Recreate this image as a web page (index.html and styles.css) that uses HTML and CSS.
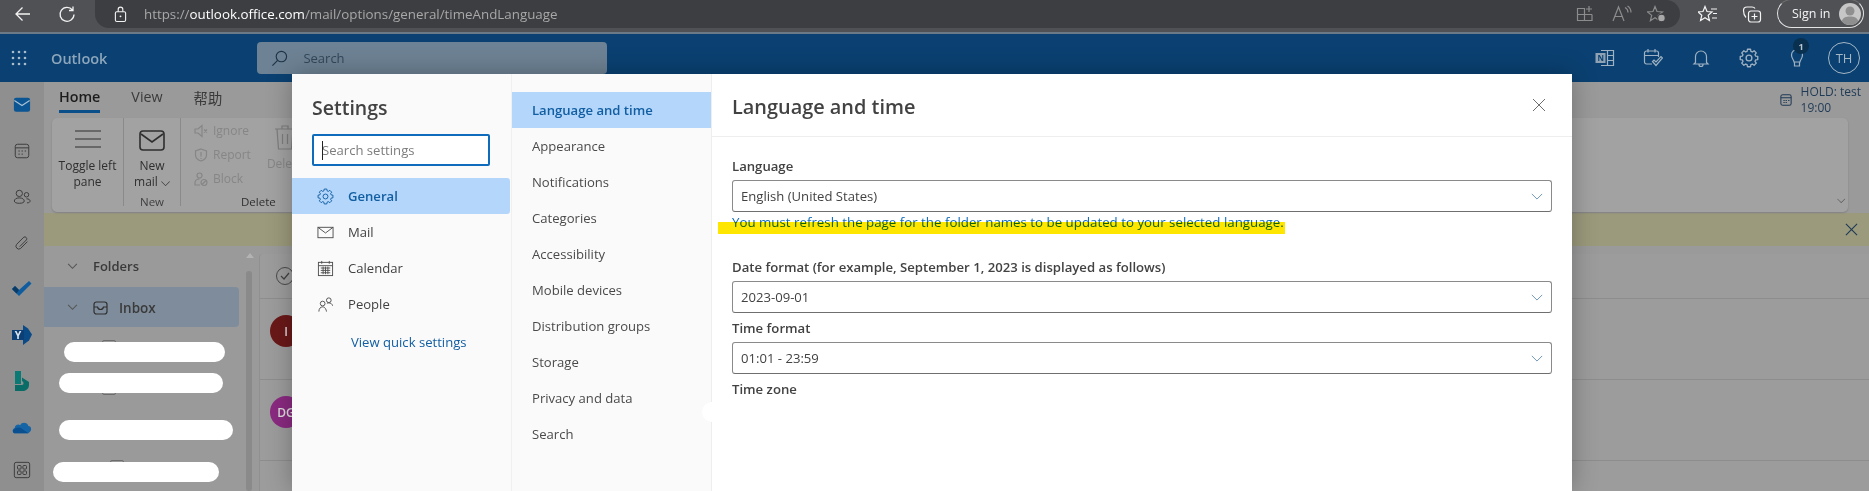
FILE: index.html
```html
<!DOCTYPE html>
<html lang="en">
<head>
<meta charset="utf-8">
<title>Outlook settings</title>
<link rel="stylesheet" href="styles.css">
</head>
<body>
<div class="page">
  <div class="chrome">
    <svg class="c-btn back" viewBox="0 0 18 18"><path d="M16 9H2M8.500 2.500 2 9l6.500 6.500"/></svg>
    <svg class="c-btn reload" viewBox="0 0 18 18"><path d="M14.500 5A7 7 0 1 0 16 9.500M15 1.500V5.500H11"/></svg>
    <div class="addr">
      <svg class="lock" viewBox="0 0 14 18"><rect x="1.500" y="6" width="11" height="10.500" rx="1.500"/><path d="M4.500 6V3.500a2.500 2.500 0 0 1 5 0V6"/><circle cx="7" cy="11" r="1" class="dot"/></svg>
      <span class="url"><span class="dim">https://</span>outlook.office.com<span class="dim">/mail/options/general/timeAndLanguage</span></span>
      <div class="addr-icons">
        <svg class="c-ico muted first" viewBox="0 0 18 18"><path d="M1.500 3.500h7v12h-7zM1.500 9.500h14.500M8.500 15.500h7.500V9.500M8.500 9.500V3.500M13 1v6M10 4h6"/></svg>
        <svg class="c-ico muted wide" viewBox="0 0 20 18"><path d="M1 16 6.500 2l5.500 14M3 11.500h7M13 2.500c2 1 3 3 3 5M15.500 1c2.500 1.500 3.500 4 3.500 6.500"/></svg>
        <svg class="c-ico muted wide" viewBox="0 0 20 18"><path d="M8 1.500 10 6.500l5.500.4-4.200 3.500 1.300 5.300L8 12.800l-4.600 2.900 1.300-5.300L.5 6.900 6 6.500z"/><circle cx="14.500" cy="13" r="3.800" class="fill"/></svg>
      </div>
    </div>
    <div class="chrome-right">
      <svg class="c-ico light wide" viewBox="0 0 20 18"><path d="M7 1.500 9 6.500l5 .4-3.800 3.300 1.200 5.300L7 12.700l-4.400 2.800 1.200-5.300L0 6.900l5-.4zM13 4h6M15 8.500h4M14 13h5"/></svg>
      <svg class="c-ico light wide" viewBox="0 0 20 18"><path d="M4 12.500C2.500 11 1.500 8 1.500 5.500c0-2 1-3.500 3.500-3.500h5c1.500 0 2.500.5 3 1.500"/><rect x="6.500" y="6" width="12" height="11" rx="2.500"/><path d="M12.500 8.500v6M9.500 11.500h6"/></svg>
      <div class="signin"><span>Sign in</span><span class="me"><svg viewBox="0 0 22 22"><circle cx="11" cy="8" r="4.500"/><path d="M2.500 19c1-4.500 4.500-5.500 8.500-5.500s7.500 1 8.500 5.500a11 11 0 0 1-17 0z"/></svg></span></div>
    </div>
  </div>

  <header class="topbar">
    <svg class="waffle" viewBox="0 0 16 16"><g><circle cx="2" cy="2" r="1.300"/><circle cx="8" cy="2" r="1.300"/><circle cx="14" cy="2" r="1.300"/><circle cx="2" cy="8" r="1.300"/><circle cx="8" cy="8" r="1.300"/><circle cx="14" cy="8" r="1.300"/><circle cx="2" cy="14" r="1.300"/><circle cx="8" cy="14" r="1.300"/><circle cx="14" cy="14" r="1.300"/></g></svg>
    <span class="brand">Outlook</span>
    <div class="search">
      <svg viewBox="0 0 18 18"><circle cx="11" cy="7" r="5.500"/><path d="M7 11 1.500 16.500"/></svg>
      <span>Search</span>
    </div>
    <div class="top-icons">
      <svg class="t-ico" viewBox="0 0 20 20"><rect x="0.500" y="5" width="10" height="10" class="note-box"/><path d="M6 2.500h12.500v15H6M12.500 2.500v15M12.500 7.500h6M12.500 12.500h6"/><text x="2.500" y="13" class="note-n">N</text></svg>
      <svg class="t-ico" viewBox="0 0 20 20"><path d="M9 16H3.500a2 2 0 0 1-2-2V5a2 2 0 0 1 2-2h10a2 2 0 0 1 2 2v4M1.500 7.500h14M5 1v3.500M12 1v3.500M9.500 13.500l3.500 4 6.500-7.500-1.500-1.500-5 5.500-2-2z"/></svg>
      <svg class="t-ico" viewBox="0 0 20 20"><path d="M4.500 14.500V8.500a5.500 5.500 0 0 1 11 0v6l1.500 1.500H3zM8 16.500a2 2 0 0 0 4 0"/></svg>
      <svg class="t-ico" viewBox="0 0 18 18"><circle cx="9" cy="9" r="2.600"/><path class="cog" d="M16.880 7.610 16.880 10.390 14.960 10.710 14.420 12 15.550 13.590 13.590 15.550 12 14.420 10.710 14.960 10.390 16.880 7.610 16.880 7.290 14.960 6 14.420 4.410 15.550 2.450 13.590 3.580 12 3.040 10.710 1.120 10.390 1.120 7.610 3.040 7.290 3.580 6 2.450 4.410 4.410 2.450 6 3.580 7.290 3.040 7.610 1.120 10.390 1.120 10.710 3.040 12 3.580 13.590 2.450 15.550 4.410 14.420 6 14.960 7.290z"/></svg>
      <span class="tip">
        <svg class="t-ico" viewBox="0 0 20 20"><path d="M7 14c0-2-2.500-3.500-2.500-7a5.500 5.500 0 0 1 11 0c0 3.500-2.500 5-2.500 7zM7.500 14v4h5v-4"/></svg>
        <span class="badge">1</span>
      </span>
      <span class="avatar-th">TH</span>
    </div>
  </header>

  <div class="app">
    <nav class="rail">
      <span class="r-item"><svg viewBox="0 0 20 18"><rect x="1" y="1" width="18" height="15.500" rx="2.500" class="solid-blue"/><path d="M1.500 4 10 9.500 18.500 4" class="white-line"/></svg></span>
      <span class="r-item"><svg viewBox="0 0 20 20"><rect x="2.500" y="2.500" width="15" height="15" rx="2.500"/><path d="M2.500 6.500h15M6 10h1.500M9.500 10H11M13 10h1.500M6 13.500h1.500M9.500 13.500H11"/></svg></span>
      <span class="r-item"><svg viewBox="0 0 20 20"><circle cx="7" cy="6" r="3.500"/><path d="M1.500 14.500c0-2 2-3.500 5.500-3.500s5.500 1.500 5.500 3.500c0 1.500-2 2.500-5.500 2.500s-5.500-1-5.500-2.500z"/><circle cx="15" cy="7.500" r="2.500"/><path d="M15 12c2.500 0 4 1 4 2.500 0 1-1 2-3.500 2"/></svg></span>
      <span class="r-item"><svg viewBox="0 0 20 20"><path d="M16 8.500 8.500 16a3.200 3.200 0 0 1-4.500-4.500L12 3.500a2.200 2.200 0 0 1 3 3L7.500 14"/></svg></span>
      <span class="r-item"><svg class="solid big" viewBox="0 0 20 16"><path d="M0 8 3 5l4 4L17 0l2.500 2.500L7 15z" class="todo"/><path d="M3 5l4 4-2.500 3.500L0 8z" class="todo-dark"/></svg></span>
      <span class="r-item"><svg class="solid big" viewBox="0 0 20 20"><path d="M11 0l5 3.500 4 6-3 6-6 4.500z" class="ya"/><rect x="0" y="5" width="12" height="10" class="ya-box"/><text x="2.800" y="13.500" class="ya-y">Y</text></svg></span>
      <span class="r-item"><svg class="solid big" viewBox="0 0 14 20"><rect x="0" y="0" width="6" height="13" class="bi"/><path d="M7 6.500 14 11v3c0 3.500-3 6-6 6H0v-6h7c2 0 2-3 0-4z" class="bi-dark"/></svg></span>
      <span class="r-item"><svg class="solid big" viewBox="0 0 22 16"><path d="M3 15C0 14 0 10 3 9c0-3 4-5 6-3 2-4 8-3 9 1 3 0 4 4 2 6-1 1-2 2-3 2z" class="od"/><path d="M1 12c3-4 7-4 10-2l7 5H3C2 15 1 14 1 12z" class="od-dark"/></svg></span>
      <span class="r-item apps"><svg viewBox="0 0 20 20"><rect x="1.500" y="1.500" width="17" height="17" rx="2"/><rect x="5" y="5" width="4" height="4" rx="1"/><rect x="11" y="5" width="4" height="4" rx="1"/><rect x="5" y="11" width="4" height="4" rx="1"/><rect x="11" y="11" width="4" height="4" rx="1"/></svg></span>
    </nav>

    <main class="work">
      <div class="tabs">
        <span class="tab active">Home</span>
        <span class="tab">View</span>
        <span class="tab cjk">帮助</span>
        <div class="hold">
          <svg viewBox="0 0 14 14"><rect x="1" y="1" width="12" height="12" rx="2"/><path d="M1 4.500h12M4 7.500h1.500M6.500 7.500H8M9.500 7.500H11M4 10h1.500M6.500 10H8"/></svg>
          <div><div>HOLD: test</div><div>19:00</div></div>
        </div>
      </div>
      <section class="ribbon">
        <div class="r-group toggle">
          <svg viewBox="0 0 26 18"><path d="M0 1h26M0 9h26M0 17h26"/></svg>
          <span>Toggle left</span><span>pane</span>
        </div>
        <div class="r-group newmail">
          <svg viewBox="0 0 26 21"><rect x="1" y="1" width="24" height="19" rx="3"/><path d="M2 4l11 8 11-8"/></svg>
          <span>New</span><span>mail ⌵</span>
          <span class="g-label">New</span>
        </div>
        <div class="r-group del">
          <div class="del-list">
            <span class="d-row"><svg viewBox="0 0 14 14"><path d="M1 5h3l4-3.500v11L4 9H1zM10 5.500l3 3M13 5.500l-3 3"/></svg>Ignore</span>
            <span class="d-row"><svg viewBox="0 0 14 14"><path d="M7 1l5.500 2v4c0 3-2.500 5-5.500 6-3-1-5.500-3-5.500-6V3zM7 4v4.500M7 10v1"/></svg>Report</span>
            <span class="d-row"><svg viewBox="0 0 14 14"><circle cx="5.500" cy="3.500" r="2.500"/><path d="M1 11c0-3 2-4 4.500-4M1 11v2h5"/><circle cx="10" cy="10.500" r="3"/><path d="M8 12.500l4-4"/></svg>Block</span>
          </div>
          <div class="trash">
            <svg viewBox="0 0 22 27"><path d="M1 5h20M8 5V2h6v3M3 5l1.500 20h13L19 5M8.500 10v10M13.500 10v10"/></svg>
            <span>Delete</span>
          </div>
          <span class="g-label">Delete</span>
        </div>
        <span class="r-more">⌵</span>
      </section>
      <div class="banner"><svg viewBox="0 0 14 14"><path d="M1 1l12 12M13 1 1 13"/></svg></div>
      <div class="lower">
        <aside class="folders">
          <div class="f-row"><svg class="chev" viewBox="0 0 12 8"><path d="M1 1l5 5 5-5"/></svg><span>Folders</span></div>
          <div class="f-row inbox"><svg class="chev" viewBox="0 0 12 8"><path d="M1 1l5 5 5-5"/></svg><svg class="in-ico" viewBox="0 0 15 14"><rect x="1" y="1" width="13" height="12" rx="2.500"/><path d="M1 6h3.500c.5 2 1.500 2.500 3 2.500s2.500-.5 3-2.500H14"/></svg><span>Inbox</span></div>
        </aside>
        <div class="scroller"><span class="sc-up"></span><span class="sc-bar"></span></div>
        <section class="list">
          <div class="l-head"><span class="check"><svg viewBox="0 0 16 16"><path d="M4 8l3 3 5-6"/></svg></span></div>
          <div class="l-row"><span class="person red">I</span></div>
          <div class="l-row"><span class="person purple">DG</span></div>
        </section>
      </div>
    </main>
  </div>

  <span class="folder-tip t1"></span>
  <span class="folder-tip t2"></span>
  <span class="folder-tip t3"></span>
  <span class="pill p1"></span>
  <span class="pill p2"></span>
  <span class="pill p3"></span>
  <span class="pill p4"></span>

  <div class="modal">
    <div class="m-left">
      <h2 class="m-title">Settings</h2>
      <div class="m-search"><span class="caret"></span><span>Search settings</span></div>
      <div class="m-nav on"><svg viewBox="0 0 18 18"><circle cx="9" cy="9" r="2.600"/><path class="cog" d="M16.880 7.610 16.880 10.390 14.960 10.710 14.420 12 15.550 13.590 13.590 15.550 12 14.420 10.710 14.960 10.390 16.880 7.610 16.880 7.290 14.960 6 14.420 4.410 15.550 2.450 13.590 3.580 12 3.040 10.710 1.120 10.390 1.120 7.610 3.040 7.290 3.580 6 2.450 4.410 4.410 2.450 6 3.580 7.290 3.040 7.610 1.120 10.390 1.120 10.710 3.040 12 3.580 13.590 2.450 15.550 4.410 14.420 6 14.960 7.290z"/></svg><span>General</span></div>
      <div class="m-nav"><svg viewBox="0 0 18 18"><rect x="1" y="3.500" width="16" height="11" /><path d="M1 3.500l8 6 8-6"/></svg><span>Mail</span></div>
      <div class="m-nav"><svg viewBox="0 0 18 18"><rect x="1.500" y="2.500" width="15" height="14"/><path d="M1.500 6h15M5 1v3M13 1v3M4 8.500h10M4 11h10M4 13.500h10M6.500 7v8M9 7v8M11.500 7v8"/></svg><span>Calendar</span></div>
      <div class="m-nav"><svg viewBox="0 0 18 18"><circle cx="12.500" cy="4.500" r="2.500"/><circle cx="6" cy="8" r="2.500"/><path d="M2 16.500c0-3 1.500-5 4-5 1.500 0 2.500 1 3 2M10 16.500c0-1-.3-2-1-3M10.500 8c.5-.500 1-.7 2-.7 2 0 3.500 1 4 3"/></svg><span>People</span></div>
      <a class="m-link">View quick settings</a>
    </div>
    <div class="m-mid">
      <div class="m-sub on">Language and time</div>
      <div class="m-sub">Appearance</div>
      <div class="m-sub">Notifications</div>
      <div class="m-sub">Categories</div>
      <div class="m-sub">Accessibility</div>
      <div class="m-sub">Mobile devices</div>
      <div class="m-sub">Distribution groups</div>
      <div class="m-sub">Storage</div>
      <div class="m-sub">Privacy and data</div>
      <div class="m-sub">Search</div>
      <span class="notch"></span>
    </div>
    <div class="m-right">
      <div class="m-head">
        <h2 class="m-title sub">Language and time</h2>
        <svg class="m-close" viewBox="0 0 14 14"><path d="M1 1l12 12M13 1 1 13"/></svg>
      </div>
      <div class="form">
        <label class="f-label">Language</label>
        <div class="f-select"><span>English (United States)</span><svg viewBox="0 0 14 8"><path d="M1 1l6 6 6-6"/></svg></div>
        <p class="f-note">You must refresh the page for the folder names to be updated to your selected language.<span class="marker"></span></p>
        <label class="f-label date">Date format (for example, September 1, 2023 is displayed as follows)</label>
        <div class="f-select"><span>2023-09-01</span><svg viewBox="0 0 14 8"><path d="M1 1l6 6 6-6"/></svg></div>
        <label class="f-label next">Time format</label>
        <div class="f-select"><span>01:01 - 23:59</span><svg viewBox="0 0 14 8"><path d="M1 1l6 6 6-6"/></svg></div>
        <label class="f-label next">Time zone</label>
      </div>
    </div>
  </div>
</div>
</body>
</html>
```
FILE: styles.css
```css
* { box-sizing: border-box; }
html, body { margin: 0; padding: 0; }
body { font-family: "Open Sans", "Noto Sans", "Noto Sans CJK SC", sans-serif; color: #424242; }
svg { fill: none; stroke: currentColor; stroke-width: 1.2; flex: none; display: block; }
.cog { stroke-linejoin: round; }
h2, p { margin: 0; font-weight: inherit; }

.page { position: relative; width: 1869px; height: 491px; overflow: hidden; background: #9a9a9a; }

/* browser chrome */
.chrome { height: 34px; background: #505155; border-bottom: 2px solid #6c7a88; display: flex; align-items: flex-start; color: #f2f2f2; }
.c-btn { width: 18px; height: 18px; margin-top: 5px; stroke-width: 1.300; }
.back { margin-left: 14px; }
.reload { margin-left: 26px; }
.addr { margin-left: 19px; width: 1585px; height: 28px; background: #3d3e42; border-radius: 0 14px 14px 14px; display: flex; align-items: center; padding: 0 13px 0 19px; }
.lock { width: 13px; height: 17px; color: #f2f2f2; }
.lock .dot { fill: #f2f2f2; stroke: none; }
.url { margin-left: 17px; font-size: 13.350px; color: #fff; white-space: nowrap; font-family: "Open Sans", sans-serif; }
.url .dim { color: #a8a8a8; }
.addr-icons { margin-left: auto; display: flex; gap: 15px; align-items: center; }
.c-ico { width: 18px; height: 18px; }
.c-ico.wide { width: 20px; }
.c-ico.first { margin-right: 3px; }
.muted { color: #8c8c8c; }
.muted .fill { fill: #a8a8a8; stroke: #3d3e42; }
.light { color: #f4f4f4; }
.chrome-right { margin-left: 18px; display: flex; align-items: center; gap: 24px; height: 28px; }
.signin { width: 87px; height: 29px; margin: -1px 0 0 -9px; border: 1px solid #e4e4e4; border-top-color: #6d6d6d; border-radius: 15px; display: flex; align-items: center; justify-content: space-between; padding: 0 2px 0 14px; font-size: 12.500px; color: #f4f4f4; }
.me { width: 22px; height: 22px; border-radius: 50%; background: #c6c6c6; overflow: hidden; }
.me svg { width: 22px; height: 22px; fill: #8f8f8f; stroke: none; }

/* outlook bar */
.topbar { height: 48px; background: #0a4172; display: flex; align-items: center; position: relative; color: #9fb3c4; }
.waffle { width: 16px; height: 16px; margin-left: 11px; fill: #a9bccd; stroke: none; }
.brand { margin-left: 24px; font-size: 14.500px; font-weight: 600; color: #8ea6bb; }
.search { margin-left: 150px; width: 350px; height: 32px; background: #6d8294; border-radius: 4px; display: flex; align-items: center; color: #1f3346; font-size: 13px; }
.search svg { width: 17px; height: 17px; margin-left: 14px; color: #1f3346; }
.search span { margin-left: 15px; color: #33475a; }
.top-icons { margin-left: auto; margin-right: 9px; display: flex; align-items: center; }
.t-ico { width: 20px; height: 20px; margin-right: 28px; color: #a0b2c2; }
.note-box { fill: #8fa2b3; stroke: none; }
.note-n { font-size: 8px; font-weight: 700; fill: #0a4172; stroke: none; }
.tip { position: relative; display: flex; margin-right: -7px; }
.badge { position: absolute; left: 6px; top: -10px; width: 16px; height: 16px; border-radius: 50%; background: #09304f; color: #b9c6d1; font-size: 9px; font-weight: 700; display: flex; align-items: center; justify-content: center; }
.avatar-th { width: 32px; height: 32px; border: 1px solid #a5b6c5; border-radius: 50%; color: #a5b6c5; font-size: 13px; display: flex; align-items: center; justify-content: center; }

/* app shell */
.app { display: flex; height: 409px; }
.rail { width: 44px; flex: none; background: #8f8f8f; display: flex; flex-direction: column; color: #3d3d3d; }
.r-item { height: 46px; display: flex; align-items: center; justify-content: center; flex: none; }
.r-item svg { width: 18px; height: 18px; stroke-width: 1.100; }
.r-item svg.big { width: 20px; height: 20px; }
.r-item svg.solid { stroke: none; }
.r-item.apps { margin-top: -3px; }
.solid-blue { fill: #0a5592; stroke: none; }
.white-line { stroke: #a9c0d3; stroke-width: 1.400; }
.todo { fill: #0f5c9e; }
.todo-dark { fill: #0a3a66; }
.ya { fill: #0a4a86; }
.ya-box { fill: #0b3f76; }
.ya-y { font-size: 10.500px; font-weight: 700; fill: #dde6ee; }
.bi { fill: #0b7a75; }
.bi-dark { fill: #0a6c66; }
.od { fill: #1565a6; }
.od-dark { fill: #0a4f8f; }

.work { flex: 1; min-width: 0; display: flex; flex-direction: column; }
.tabs { height: 36px; display: flex; align-items: flex-start; padding-left: 15px; position: relative; font-size: 14.300px; flex: none; color: #3a3a3a; }
.tab { height: 31px; padding-top: 5px; margin-right: 31px; border-bottom: 3px solid transparent; }
.tab.active { font-weight: 600; color: #1c1c1c; border-bottom-color: #0a4f8a; }
.tab.cjk { font-family: "Noto Sans CJK SC", sans-serif; }
.hold { position: absolute; right: 8px; top: 0; display: flex; align-items: center; gap: 9px; font-size: 12px; line-height: 16px; color: #1f3a56; height: 34px; padding-top: 1px; }
.hold svg { width: 12px; height: 12px; color: #1f3a56; }

.ribbon { height: 94px; margin: 0 21px 1px 8px; background: #a2a2a2; border-radius: 5px; box-shadow: 0 1px 2px #808080; display: flex; position: relative; flex: none; font-size: 12px; color: #2f2f2f; }
.r-group { display: flex; flex-direction: column; align-items: center; position: relative; line-height: 16px; border-right: 1px solid #8a8a8a; height: 88px; }
.toggle { width: 72px; padding-top: 12px; }
.toggle svg { width: 26px; height: 18px; margin-bottom: 10px; }
.newmail { width: 57px; padding-top: 12px; }
.newmail svg { width: 26px; height: 21px; margin-bottom: 7px; stroke-width: 1.600; }
.g-label { position: absolute; bottom: -4px; left: 0; right: 0; text-align: center; font-size: 11.500px; line-height: 16px; color: #3f3f3f; }
.del { width: 120px; border-right: 0; flex-direction: row; align-items: flex-start; color: #868686; }
.del .g-label { color: #2f2f2f; left: 60px; right: auto; }
.del-list { display: flex; flex-direction: column; gap: 8px; padding: 5px 0 0 13px; }
.d-row { display: flex; align-items: center; gap: 5px; height: 16px; }
.d-row svg { width: 14px; height: 14px; }
.trash { margin-left: 16px; padding-top: 6px; display: flex; flex-direction: column; align-items: center; }
.trash svg { width: 22px; height: 27px; color: #7d7d7d; margin-bottom: 5px; }
.r-more { position: absolute; right: 3px; bottom: 6px; font-size: 11px; color: #444; line-height: 14px; }

.banner { height: 33px; background: #9b9a7c; flex: none; display: flex; align-items: center; justify-content: flex-end; padding-right: 11px; color: #1f3a56; }
.banner svg { width: 13px; height: 13px; }

.lower { flex: 1; display: flex; min-height: 0; }
.folders { width: 195px; flex: none; padding-top: 5px; }
.f-row { height: 30px; display: flex; align-items: center; padding-left: 23px; font-size: 13px; font-weight: 600; color: #3a3a3a; }
.f-row span { margin-left: 15px; }
.chev { width: 11px; height: 7px; color: #555; }
.inbox { height: 40px; margin-top: 6px; padding-top: 1px; background: #7e8c9b; border-radius: 0 4px 4px 0; }
.in-ico { width: 15px; height: 14px; margin-left: 15px; color: #2f2f2f; }
.inbox span { margin-left: 11px; font-size: 13.500px; }
.scroller { width: 20px; flex: none; position: relative; }
.sc-up { position: absolute; left: 7px; top: 7px; border: 4px solid transparent; border-bottom: 5px solid #b3b3b3; border-top: 0; }
.sc-bar { position: absolute; left: 7px; top: 25px; bottom: 0; width: 6px; background: #8a8a8a; border-radius: 3px; }
.list { flex: 1; margin-top: 8px; background: #9c9c9c; border-left: 1px solid #909090; border-radius: 4px 0 0 0; }
.l-head { height: 45px; border-bottom: 1px solid #8d8d8d; display: flex; align-items: center; padding-left: 15px; }
.check { width: 18px; height: 18px; border: 1px solid #4a4a4a; border-radius: 50%; display: block; margin-left: 1px; }
.check svg { width: 16px; height: 16px; }
.l-row { height: 81px; border-bottom: 1px solid #8d8d8d; padding: 16px 0 0 10px; }
.person { width: 32px; height: 32px; border-radius: 50%; display: flex; align-items: center; justify-content: center; color: #ddd; font-size: 12px; font-weight: 600; }
.red { background: #6a1818; }
.purple { background: #8a2a80; }

/* folder icons showing from under the redaction marks */
.folder-tip { position: absolute; width: 14px; height: 8px; border: 1px solid #6d6d6d; border-radius: 2px; }
.t1 { left: 102px; top: 340px; }
.t2 { left: 102px; top: 387px; }
.t3 { left: 110px; top: 460px; }

/* redaction marks lying on the folder tree */
.pill { position: absolute; height: 20px; border-radius: 10px; background: #fff; }
.p1 { left: 64px; top: 342px; width: 161px; }
.p2 { left: 59px; top: 373px; width: 164px; }
.p3 { left: 59px; top: 420px; width: 174px; }
.p4 { left: 53px; top: 462px; width: 166px; }

/* settings dialog */
.modal { position: absolute; left: 292px; top: 74px; width: 1280px; height: 417px; background: #fff; display: flex; box-shadow: 0 0 24px rgba(0, 0, 0, .28); font-size: 13.100px; }
.m-left { width: 220px; flex: none; background: #fafafa; border-right: 1px solid #f0f0f0; padding-top: 20px; }
.m-title { font-size: 19.500px; font-weight: 600; line-height: 28px; padding-left: 20px; color: #424242; }
.m-search { margin: 12px 21px 12px 20px; height: 32px; border: 2px solid #0f6cbd; border-radius: 2px; background: #fff; display: flex; align-items: center; padding-left: 8px; color: #7d7d7d; position: relative; }
.caret { position: absolute; left: 8px; top: 5px; width: 1px; height: 19px; background: #222; }
.m-nav { height: 36px; display: flex; align-items: center; padding-left: 25px; margin-right: -1px; }
.m-nav svg { width: 17px; height: 17px; color: #505050; stroke-width: 1; }
.m-nav span { margin-left: 14px; }
.m-nav.on { background: #b4d6fa; color: #115ea3; font-weight: 600; border-radius: 0 3px 3px 0; margin-right: 1px; }
.m-nav.on svg { color: #115ea3; }
.m-link { display: block; padding-left: 59px; line-height: 40px; color: #115ea3; }
.m-mid { width: 200px; flex: none; background: #fafafa; border-right: 1px solid #eeeeee; padding-top: 18px; position: relative; }
.m-sub { height: 36px; display: flex; align-items: center; padding-left: 20px; color: #4a4a4a; }
.m-sub.on { background: #b4d6fa; color: #115ea3; font-weight: 600; }
.notch { position: absolute; right: -1px; top: 328px; width: 10px; height: 20px; border-radius: 10px 0 0 10px; background: #fff; }
.m-right { flex: 1; min-width: 0; }
.m-head { height: 63px; border-bottom: 1px solid #eeeeee; display: flex; align-items: center; justify-content: space-between; padding: 0 26px 0 20px; }
.m-title.sub { padding: 4px 0 0; font-size: 19.900px; }
.m-close { width: 14px; height: 14px; color: #6e6e6e; stroke-width: 1; }
.form { padding: 19px 20px 0; }
.f-label { display: block; height: 20px; line-height: 20px; font-weight: 600; margin-bottom: 4px; color: #424242; font-size: 13.150px; }
.f-label.date { margin-top: 24px; }
.f-label.next { margin-top: 5px; }
.f-select { height: 32px; border: 1px solid #8a8a8a; border-bottom-color: #6f6f6f; border-radius: 3px; display: flex; align-items: center; justify-content: space-between; padding: 0 8px; color: #424242; }
.f-select svg { width: 12px; height: 7px; color: #5b87ad; stroke-width: 1; }
.f-note { position: relative; height: 21px; line-height: 21px; color: #0f6cbd; white-space: nowrap; font-size: 13.300px; }
.marker { position: absolute; left: -14px; top: 10px; width: 567px; height: 12px; background: #ffe600; mix-blend-mode: multiply; }
```
